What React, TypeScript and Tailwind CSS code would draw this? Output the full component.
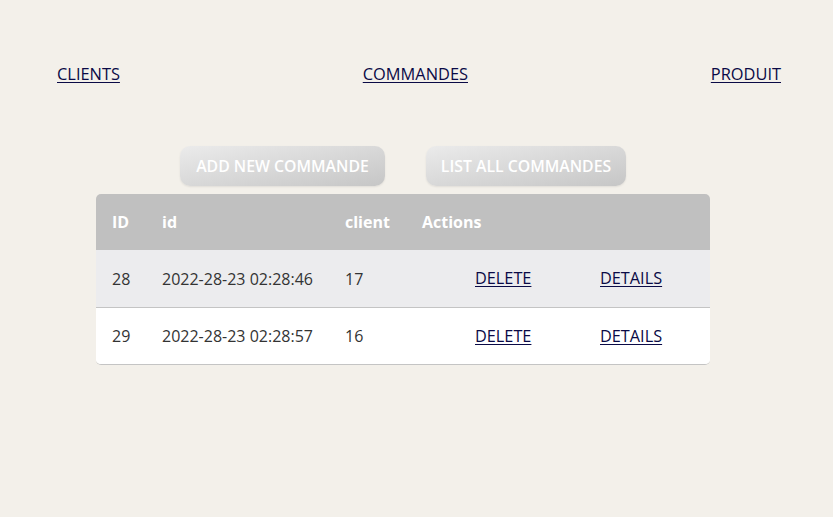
import React from 'react';

const rows = [
    { id: 28, date: '2022-28-23 02:28:46', client: 17 },
    { id: 29, date: '2022-28-23 02:28:57', client: 16 },
];

export default function App() {
    return (
        <div
            className="min-h-[517px] w-full bg-[#f3f0ea] text-[#333333]"
            style={{ fontFamily: '"Open Sans", "Liberation Sans", sans-serif' }}
        >
            {/* top nav */}
            <nav className="flex items-center justify-between pl-[57px] pr-[52px] pt-[63px]">
                <a href="#" className="text-[16.4px] leading-[22px] text-[#0a0a46] underline underline-offset-2">CLIENTS</a>
                <a href="#" className="text-[16.4px] leading-[22px] text-[#0a0a46] underline underline-offset-2">COMMANDES</a>
                <a href="#" className="text-[16.4px] leading-[22px] text-[#0a0a46] underline underline-offset-2">PRODUIT</a>
            </nav>

            <div className="ml-[96px] w-[614px]">
                <div className="mt-[61px] flex justify-center gap-[41px]">
                    <button className="h-[40px] w-[205px] rounded-[10px] bg-gradient-to-br from-[#ebebeb] to-[#c6c6c6] pt-px text-[15.8px] font-semibold text-white shadow-[0_1px_2px_rgba(0,0,0,0.08)]">
                        ADD NEW COMMANDE
                    </button>
                    <button className="h-[40px] w-[200px] rounded-[10px] bg-gradient-to-br from-[#ebebeb] to-[#c6c6c6] pt-px text-[15.8px] font-semibold text-white shadow-[0_1px_2px_rgba(0,0,0,0.08)]">
                        LIST ALL COMMANDES
                    </button>
                </div>

                <div className="mt-[8px] overflow-hidden rounded-[5px] border-b border-[#c4c4c4] text-[16px]">
                    <div className="grid h-[56px] grid-cols-[50px_183px_77px_1fr] items-center bg-[#c0c0c0] font-bold text-white">
                        <div className="pl-4">ID</div>
                        <div className="pl-4">id</div>
                        <div className="pl-4">client</div>
                        <div className="pl-4">Actions</div>
                    </div>
                    {rows.map((r, i) => (
                        <div
                            key={r.id}
                            className={
                                'grid grid-cols-[50px_183px_77px_1fr] items-center ' +
                                (i === 0 ? 'h-[58px] border-b border-[#c4c4c4] bg-[#ececee]' : 'h-[56px] bg-white')
                            }
                        >
                            <div className="pl-4">{r.id}</div>
                            <div className="pl-4">{r.date}</div>
                            <div className="pl-4">{r.client}</div>
                            <div className="grid grid-cols-[125px_1fr] pl-[69px]">
                                <a href="#" className="text-[16.3px] text-[#0a0a46] underline underline-offset-2">DELETE</a>
                                <a href="#" className="text-[16.3px] text-[#0a0a46] underline underline-offset-2">DETAILS</a>
                            </div>
                        </div>
                    ))}
                </div>
            </div>
        </div>
    );
}
